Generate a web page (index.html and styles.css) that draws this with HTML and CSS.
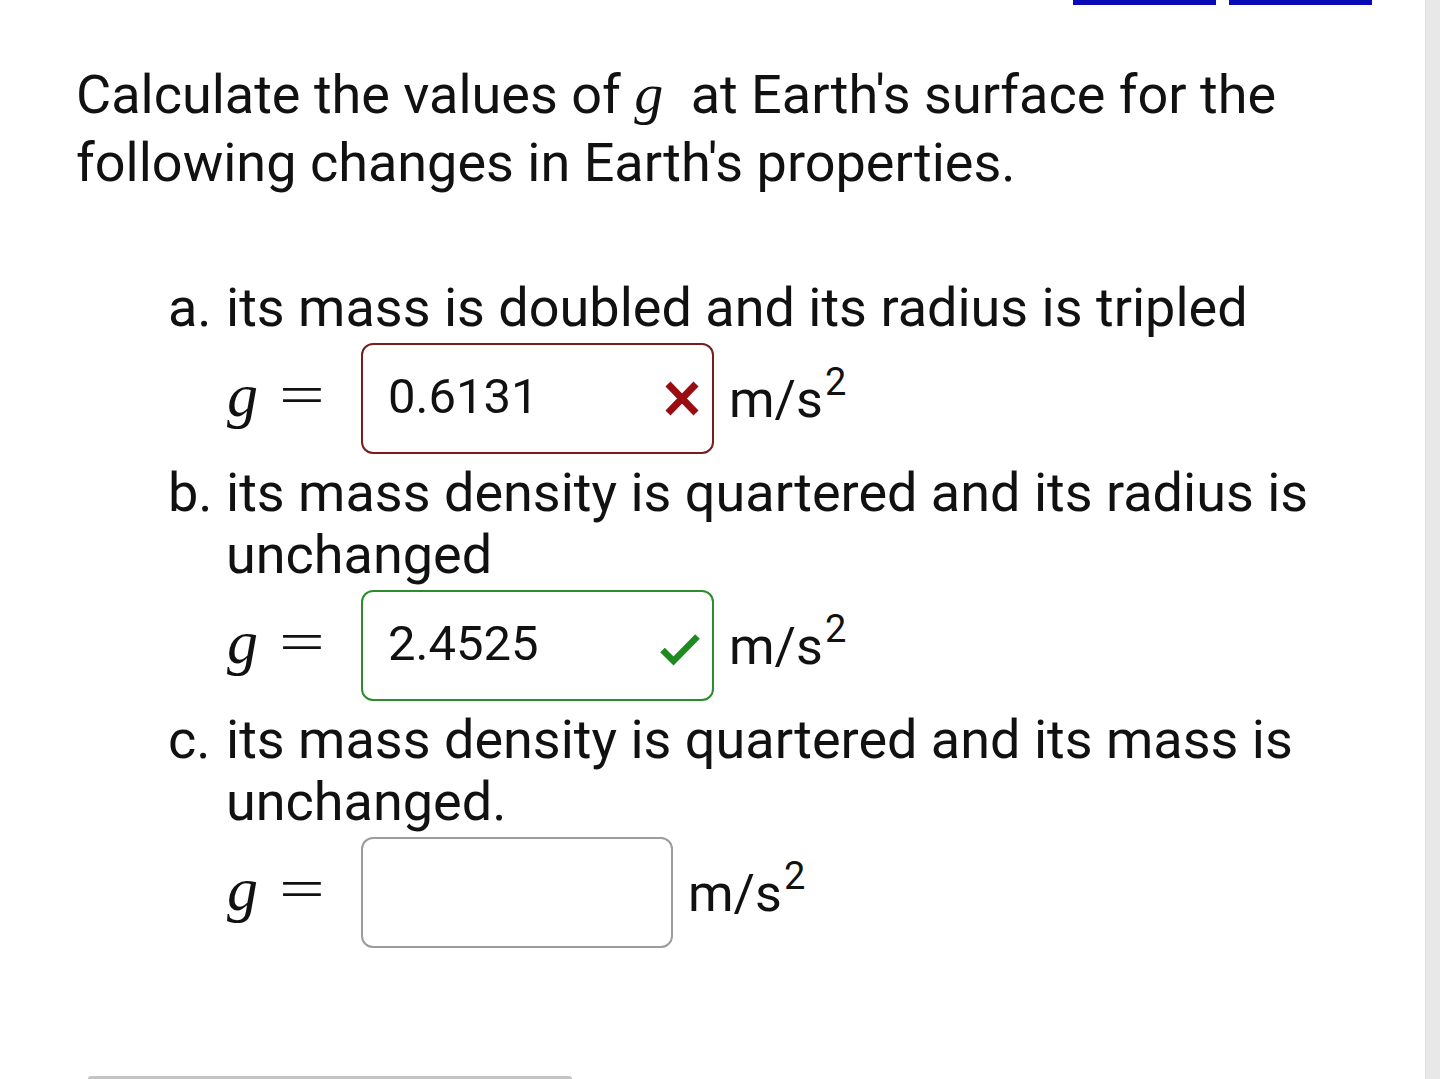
FILE: index.html
```html
<!DOCTYPE html>
<html lang="en">
<head>
<meta charset="utf-8">
<title>Earth's surface gravity</title>
<link rel="stylesheet" href="styles.css">
</head>
<body>
<div class="page">
  <main class="main">
    <div class="topbar">
      <span class="tab"></span>
      <span class="tab"></span>
    </div>
    <p class="prompt">Calculate the values of <span class="mi">g</span> at Earth's surface for the following changes in Earth's properties.</p>

    <div class="item">
      <span class="marker">a.</span>
      <div class="body">
        <div class="text">its mass is doubled and its radius is tripled</div>
        <div class="answer">
          <span class="lhs"><span class="mi">g</span><span class="eq">=</span></span>
          <div class="box box-wrong">
            <span class="val">0.6131</span>
            <svg class="icon" width="36" height="37" viewBox="0 0 36 37"><path d="M4 4 L32 33 M32 4 L4 33" stroke="#9b0b12" stroke-width="7" stroke-linecap="butt" fill="none"/></svg>
          </div>
          <span class="unit">m/s<sup>2</sup></span>
        </div>
      </div>
    </div>

    <div class="item">
      <span class="marker">b.</span>
      <div class="body">
        <div class="text">its mass density is quartered and its radius is unchanged</div>
        <div class="answer">
          <span class="lhs"><span class="mi">g</span><span class="eq">=</span></span>
          <div class="box box-right">
            <span class="val">2.4525</span>
            <svg class="icon" width="40" height="34" viewBox="0 0 40 34"><path d="M2.5 18 L13.5 29 L37.5 4.5" stroke="#1f8a1f" stroke-width="6.5" stroke-linejoin="miter" fill="none"/></svg>
          </div>
          <span class="unit">m/s<sup>2</sup></span>
        </div>
      </div>
    </div>

    <div class="item">
      <span class="marker">c.</span>
      <div class="body">
        <div class="text">its mass density is quartered and its mass is unchanged.</div>
        <div class="answer">
          <span class="lhs"><span class="mi">g</span><span class="eq">=</span></span>
          <div class="box box-empty"></div>
          <span class="unit">m/s<sup>2</sup></span>
        </div>
      </div>
    </div>

    <div class="bottombar"></div>
  </main>
  <aside class="track"></aside>
</div>
</body>
</html>
```

FILE: styles.css
```css
* { box-sizing: border-box; }

html, body {
  margin: 0;
  padding: 0;
  background: #ffffff;
}

body {
  font-family: Roboto, "Liberation Sans", Arial, sans-serif;
  color: #111111;
  height: 1079px;
  overflow: hidden;
}

.page {
  display: flex;
  height: 1079px;
}

.main {
  flex: 1;
  padding: 0 55px 0 76px;
  display: flex;
  flex-direction: column;
}

.topbar {
  display: flex;
  justify-content: flex-end;
  gap: 13px;
  height: 5px;
  margin-right: -2px;
}

.tab {
  width: 143px;
  height: 5px;
  background: #0a0ab4;
}

.prompt {
  margin: 55px 0 0 0;
  font-size: 54px;
  line-height: 68px;
}

.prompt .mi {
  font-family: "Liberation Serif", "Times New Roman", serif;
  font-style: italic;
  font-size: 58px;
  margin: 0 14px 0 0;
}

.item {
  display: flex;
  margin-left: 92px;
  font-size: 54px;
  line-height: 62px;
}

.prompt + .item { margin-top: 80px; }

.marker {
  width: 58px;
  flex: none;
}

.body {
  flex: 1;
  display: flex;
  flex-direction: column;
}

.answer {
  display: flex;
  align-items: center;
  margin: 4px 0 8px 0;
}

.lhs {
  width: 135px;
  display: flex;
  align-items: center;
  padding-left: 1px;
  position: relative;
  top: -4px;
}

.lhs .mi {
  font-family: "Liberation Serif", "Times New Roman", serif;
  font-style: italic;
  font-size: 62px;
  width: 52px;
}

.eq {
  font-family: "Liberation Serif", serif;
  font-size: 56px;
  transform: scaleX(1.45);
  transform-origin: left center;
  display: inline-block;
  color: #111;
}

.box {
  width: 353px;
  height: 111px;
  border: 2.5px solid #999999;
  border-radius: 12px;
  display: flex;
  align-items: center;
  justify-content: space-between;
  padding: 0 12px 0 25px;
}

.box-wrong { border-color: #7a1d1d; }
.box-right { border-color: #2e8b2e; }
.box-empty { width: 312px; border-color: #9c9c9c; }

.val {
  font-size: 49px;
  line-height: 1;
  color: #111;
  position: relative;
  top: -2px;
}

.icon { display: block; }
.box-right .icon { margin-top: 6px; }

.unit {
  margin-left: 15px;
  font-size: 52px;
  line-height: 1;
  position: relative;
  top: -2px;
}

.unit sup {
  font-size: 38px;
  position: relative;
  top: -4px;
  margin-left: 2px;
}

.bottombar {
  margin-top: auto;
  margin-left: 12px;
  width: 484px;
  height: 3px;
  background: #c4c4c4;
  border-radius: 3px 3px 0 0;
}

.track {
  width: 15px;
  flex: none;
  background: #e8e8e8;
  border-left: 1px solid #dddddd;
}
```
